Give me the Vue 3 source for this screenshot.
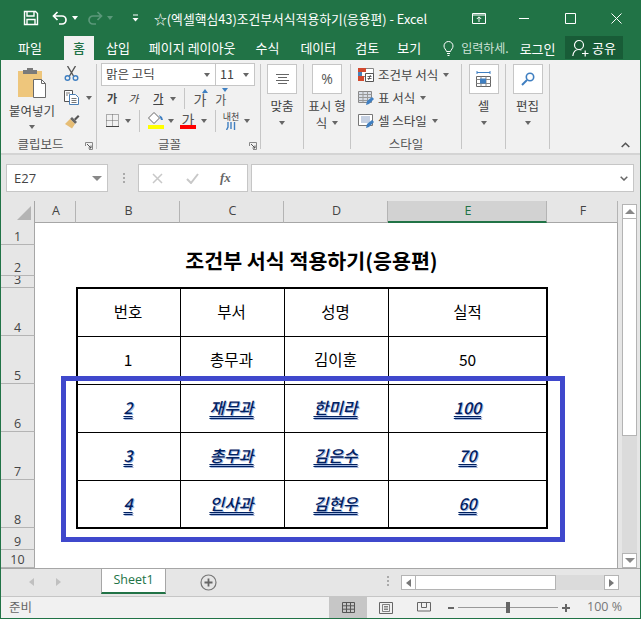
<script setup>
const tabs = [
  { t: '파일', c: 'tab-file' }, { t: '홈', c: 'tab-home' }, { t: '삽입', c: 'tab-ins' },
  { t: '페이지 레이아웃', c: 'tab-page' }, { t: '수식', c: 'tab-f' }, { t: '데이터', c: 'tab-d' },
  { t: '검토', c: 'tab-r' }, { t: '보기', c: 'tab-v' }
]
const cols = [
  { t: 'A', w: 'A' }, { t: 'B' }, { t: 'C' }, { t: 'D' }, { t: 'E', on: true }, { t: 'F' }
]
const rowHeads = ['1', '2', '3', '4', '5', '6', '7', '8', '9', '10']
const table = [
  ['번호', '부서', '성명', '실적'],
  ['1', '총무과', '김이훈', '50'],
  ['2', '재무과', '한미라', '100'],
  ['3', '총무과', '김은수', '70'],
  ['4', '인사과', '김현우', '60']
]
</script>

<template>
  <div class="win">
    <header class="title">
      <div class="qat">
        <svg class="i-save" width="16" height="16" viewBox="0 0 16 16"><path d="M1.5 1.5h11l2 2v11h-13z" fill="none" stroke="#fff" stroke-width="1.4"/><path d="M4 2v4h7V2M4 14.5V9.5h8v5" fill="none" stroke="#fff" stroke-width="1.4"/></svg>
        <svg class="i-undo" width="16" height="14" viewBox="0 0 16 14"><path d="M2 5h8a4 4 0 0 1 0 8H7M5.500 1 1.500 5l4 4" fill="none" stroke="#fff" stroke-width="1.7"/></svg>
        <i class="caret white small-gap"></i>
        <svg class="i-redo" width="16" height="14" viewBox="0 0 16 14"><path d="M14 5H6a4 4 0 0 0 0 8h3M10.500 1l4 4-4 4" fill="none" stroke="#5b987a" stroke-width="1.7"/></svg>
        <i class="caret dim small-gap"></i>
        <svg class="i-cust" width="7" height="8" viewBox="0 0 7 8"><path d="M1 1h5" stroke="#fff"/><path d="M0.500 4h6L3.500 7.500z" fill="#fff"/></svg>
      </div>
      <div class="doc">☆(엑셀핵심43)조건부서식적용하기(응용편) - Excel</div>
      <div class="winbtns">
        <svg width="14" height="11" viewBox="0 0 14 11"><path d="M.5.500h13v10H.5z" fill="none" stroke="#fff"/><path d="M0 2h14" stroke="#fff"/><path d="M7 9V4M4.800 6 7 3.800 9.200 6" fill="none" stroke="#fff"/></svg>
        <svg class="b-min" width="10" height="10" viewBox="0 0 10 10"><path d="M0 5.500h10" stroke="#fff"/></svg>
        <svg class="b-max" width="11" height="11" viewBox="0 0 11 11"><path d="M.5.500h10v10H.5z" fill="none" stroke="#fff"/></svg>
        <svg class="b-x" width="11" height="11" viewBox="0 0 11 11"><path d="M.5.500l10 10M10.500.500l-10 10" stroke="#fff"/></svg>
      </div>
    </header>

    <nav class="tabs">
      <span v-for="x in tabs" :key="x.t" class="tab" :class="x.c">{{ x.t }}</span>
      <svg class="bulb" width="11" height="15" viewBox="0 0 11 15"><path d="M3.500 10.500C3 8.500 1 7.500 1 5a4.500 4.500 0 0 1 9 0c0 2.500-2 3.500-2.500 5.500zM4 12.500h3M4.500 14.500h2" fill="none" stroke="#fff"/></svg>
      <span class="tell">입력하세.</span>
      <span class="login">로그인</span>
      <span class="share">
        <svg width="17" height="18" viewBox="0 0 17 18"><circle cx="7" cy="6" r="4.500" fill="none" stroke="#fff" stroke-width="1.200"/><path d="M.8 17c.5-4 2.500-6.500 6.200-6.500 1 0 1.800.2 2.500.5M10 14.500h6.500M13.200 11.500v6" fill="none" stroke="#fff" stroke-width="1.200"/></svg>
        공유
      </span>
    </nav>

    <section class="ribbon">
      <div class="grp g-clip">
        <div class="clip-body">
          <div class="paste">
            <svg width="28" height="30" viewBox="0 0 28 30"><path d="M0 3h24v26H0z" fill="#eec67c"/><path d="M5 2h14v4H5z" fill="#7a7a7a"/><path d="M9 0h6v3H9z" fill="#7a7a7a"/><path d="M15.500 11.500h8l4 4v14h-12z" fill="#fff" stroke="#6a6a6a"/><path d="M23.500 11.500v4h4" fill="none" stroke="#6a6a6a"/></svg>
            <span class="paste-t">붙여넣기</span>
            <i class="caret"></i>
          </div>
          <div class="clip-tools">
            <svg width="15" height="15" viewBox="0 0 15 15"><path d="M3.500 0l6 10M11.500 0l-6 10" stroke="#555" stroke-width="1.400"/><circle cx="3.500" cy="12" r="2.300" fill="none" stroke="#3f7fc1" stroke-width="1.400"/><circle cx="11.500" cy="12" r="2.300" fill="none" stroke="#3f7fc1" stroke-width="1.400"/></svg>
            <div class="copy-row">
              <svg width="16" height="15" viewBox="0 0 16 15"><path d="M.5.500h8v11h-8z" fill="#fff" stroke="#555"/><path d="M5.500 4.500h6l3 3v7h-9z" fill="#fff" stroke="#4a7eb5"/><path d="M7.500 8.500h5M7.500 10.500h5M7.500 12.500h5M2 3h4M2 5h2" stroke="#777"/></svg>
              <i class="caret"></i>
            </div>
            <svg width="16" height="15" viewBox="0 0 16 15"><path d="M10 5l4-4 1.500 1.500-4 4z" fill="#555"/><path d="M8 3l5 5-2 2-5-5z" fill="#666"/><path d="M6 5l5 5-3 4.500-7-4.500z" fill="#e6bd75"/></svg>
          </div>
        </div>
        <div class="lab lab-clip"><span>클립보드</span><svg class="launch" width="8" height="8" viewBox="0 0 8 8"><path d="M.5 4V.5H7.500V7.500H4" fill="none" stroke="#888"/><path d="M2 2l4 4M6 3.500V6H3.500" fill="none" stroke="#555"/></svg></div>
      </div>

      <div class="grp g-font">
        <div class="font-body">
          <div class="f-row1">
            <div class="combo c-name"><span>맑은 고딕</span><i class="caret"></i></div>
            <div class="combo c-size"><span>11</span><i class="caret"></i></div>
          </div>
          <div class="f-row2">
            <b class="fb">가</b><em class="fi">가</em><span class="fu">가</span><i class="caret c1"></i>
            <span class="vsep"></span>
            <span class="grow">가<i class="tri up"></i></span>
            <span class="shrink">가<i class="tri down"></i></span>
          </div>
          <div class="f-row3">
            <svg width="13" height="13" viewBox="0 0 13 13"><path d="M.5.500h12v12H.5zM6.500.5v12M.5 6.500h12" fill="none" stroke="#666" stroke-dasharray="1 1"/><path d="M0 12.500h13" stroke="#444"/></svg>
            <i class="caret c2"></i>
            <span class="vsep s2"></span>
            <div class="color fill">
              <svg width="16" height="13" viewBox="0 0 16 13"><path d="M6 .500l5.500 5.500L6 11.500.5 6z" fill="#fff" stroke="#666"/><path d="M11 3l3 2 1 3h-2z" fill="#3f7fc1"/></svg>
              <span class="bar yellow"></span>
            </div>
            <i class="caret c3"></i>
            <div class="color fcolor">
              <span class="ga">가</span>
              <span class="bar red"></span>
            </div>
            <i class="caret c4"></i>
            <span class="vsep s3"></span>
            <div class="phon">
              <span>내천</span>
              <svg width="10" height="8" viewBox="0 0 10 8"><path d="M2 0v5L.5 8M5 0v7M8.500 0v8" fill="none" stroke="#3f7fc1" stroke-width="1.400"/></svg>
            </div>
            <i class="caret c5"></i>
          </div>
        </div>
        <div class="lab lab-font"><span>글꼴</span><svg class="launch" width="8" height="8" viewBox="0 0 8 8"><path d="M.5 4V.5H7.500V7.500H4" fill="none" stroke="#888"/><path d="M2 2l4 4M6 3.500V6H3.500" fill="none" stroke="#555"/></svg></div>
      </div>

      <div class="grp g-one g-align">
        <div class="bigbox"><svg width="13" height="10" viewBox="0 0 13 10"><path d="M0 .500h13M2 3.500h9M0 6.500h13M2 9.500h9" stroke="#666"/></svg></div>
        <span class="big-t">맞춤</span>
        <i class="caret big-c"></i>
      </div>

      <div class="grp g-one g-num">
        <div class="bigbox pct">%</div>
        <span class="big-t">표시 형</span>
        <span class="big-t2">식<i class="caret"></i></span>
      </div>

      <div class="grp g-style">
        <div class="style-body">
          <div class="s-row">
            <svg width="16" height="14" viewBox="0 0 16 14"><path d="M.5.500h15v8h-15z" fill="#fff" stroke="#888"/><path d="M0 0h8v4H0z" fill="#d1492e"/><path d="M0 4h4v4H0z" fill="#4a7eb5"/><path d="M0 8h6v5H0z" fill="#d1492e"/><path d="M7.500 5.500h8v8h-8z" fill="#fff" stroke="#555"/><path d="M9.500 8.500h4M9.500 10.500h4M12.500 7l-2 5" stroke="#444" stroke-width=".8"/></svg>
            <span>조건부 서식</span><i class="caret"></i>
          </div>
          <div class="s-row">
            <svg width="16" height="15" viewBox="0 0 16 15"><path d="M.5.500h13v11H.5z" fill="#d8dde6" stroke="#888"/><path d="M.5 3.500h13M.5 6.500h13M.5 9.500h13M5 .5v11M9.500.5v11" stroke="#999" fill="none"/><path d="M8 14l1-4 5-4 2 2-5 5z" fill="#3f7fc1"/></svg>
            <span>표 서식</span><i class="caret"></i>
          </div>
          <div class="s-row">
            <svg width="16" height="15" viewBox="0 0 16 15"><path d="M.5.500h14v11H.5z" fill="#fff" stroke="#777"/><path d="M3 2h9v7H3z" fill="#c5d0e2"/><path d="M8 14l1-4 5-4 2 2-5 5z" fill="#3f7fc1"/></svg>
            <span>셀 스타일</span><i class="caret"></i>
          </div>
        </div>
        <div class="lab lab-style"><span>스타일</span></div>
      </div>

      <div class="grp g-one g-cell">
        <div class="bigbox"><svg width="15" height="17" viewBox="0 0 15 17"><path d="M1 1.500h13M1 0v3M14 0v3" stroke="#3f7fc1"/><path d="M.5 5.500h14v10H.5z" fill="#fff" stroke="#666"/><path d="M.5 8.500h14M.5 12.500h14M5 5.500v10M10 5.500v10" stroke="#888" fill="none"/><path d="M4 7.500h6v5H4z" fill="#3f7fc1"/></svg></div>
        <span class="big-t">셀</span>
        <i class="caret big-c"></i>
      </div>

      <div class="grp g-one g-edit">
        <div class="bigbox"><svg width="14" height="14" viewBox="0 0 14 14"><circle cx="9" cy="5" r="3.700" fill="none" stroke="#3f7fc1" stroke-width="1.600"/><path d="M6 8l-5 5" stroke="#3f7fc1" stroke-width="2"/></svg></div>
        <span class="big-t">편집</span>
        <i class="caret big-c"></i>
      </div>

      <svg class="collapse" width="9" height="6" viewBox="0 0 9 6"><path d="M.7 5 4.500 1.300 8.300 5" fill="none" stroke="#555" stroke-width="1.600"/></svg>
    </section>

    <section class="fbar">
      <div class="namebox"><span>E27</span><i class="caret gray"></i></div>
      <div class="grip"><i></i><i></i><i></i></div>
      <div class="fxbox">
        <svg width="11" height="11" viewBox="0 0 11 11"><path d="M1 1l9 9M10 1l-9 9" stroke="#c8c8c8" stroke-width="1.500"/></svg>
        <svg class="chk" width="13" height="11" viewBox="0 0 13 11"><path d="M1 6l4 4 7-9" fill="none" stroke="#c8c8c8" stroke-width="2"/></svg>
        <span class="fx">fx</span>
      </div>
      <div class="finput"><svg width="8" height="5" viewBox="0 0 8 5"><path d="M.7.700 4 4l3.300-3.300" fill="none" stroke="#666" stroke-width="1.500"/></svg></div>
    </section>

    <section class="work">
      <div class="sheetwrap">
        <div class="sheet">
          <div class="corner"><i class="corner-tri"></i></div>
          <div v-for="c in cols" :key="c.t" class="ch" :class="{ on: c.on }">{{ c.t }}</div>

          <div v-for="(r, i) in rowHeads" :key="r" class="rh" :class="'r' + (i + 1)"><span>{{ r }}</span></div>

          <div class="sheet-title">조건부 서식 적용하기(응용편)</div>

          <div class="data">
            <template v-for="(row, ri) in table" :key="ri">
              <div v-for="(cell, ci) in row" :key="ci" class="cell" :class="{ fmt: ri > 1, last: ci === 3, bottom: ri === 4 }"><span>{{ cell }}</span></div>
            </template>
          </div>

          <div class="mark"></div>
        </div>
      </div>
      <div class="vscroll">
        <div class="sb-btn"><i class="caret up-c"></i></div>
        <div class="sb-thumb"></div>
        <div class="sb-track"></div>
        <div class="sb-btn"><i class="caret gray"></i></div>
      </div>
    </section>

    <section class="tabbar">
      <div class="nav">
        <i class="nav-l"></i><i class="nav-r"></i>
      </div>
      <div class="sheet-tab">Sheet1</div>
      <svg class="add" width="17" height="17" viewBox="0 0 17 17"><circle cx="8.500" cy="8.500" r="7.500" fill="none" stroke="#777" stroke-width="1.200"/><path d="M8.500 4.500v8M4.500 8.500h8" stroke="#666" stroke-width="1.800"/></svg>
      <div class="grip g2"><i></i><i></i><i></i></div>
      <div class="hscroll">
        <div class="hb"><i class="nav-l dark"></i></div>
        <div class="h-thumb"></div>
        <div class="h-track"></div>
        <div class="hb"><i class="nav-r dark"></i></div>
      </div>
    </section>

    <footer class="status">
      <span class="ready">준비</span>
      <div class="views">
        <div class="view on"><svg width="13" height="11" viewBox="0 0 13 11"><path d="M.5.500h12v10H.5zM.5 3.800h12M.5 7.200h12M4.500.500v10M8.500.500v10" fill="none" stroke="#555"/></svg></div>
        <div class="view"><svg width="14" height="12" viewBox="0 0 14 12"><path d="M.5.500h13v11H.5z" fill="none" stroke="#666"/><path d="M3.500 2.500h7v7h-7zM5 4.500h4M5 6h4M5 7.500h4" fill="none" stroke="#666" stroke-width=".8"/></svg></div>
        <div class="view"><svg width="14" height="12" viewBox="0 0 14 12"><path d="M.5 9V.500h13V9zM4.500.500v5h5v-5" fill="none" stroke="#666"/></svg></div>
      </div>
      <div class="zoom">
        <i class="zm"></i>
        <div class="slider"><i></i></div>
        <i class="zp"></i>
      </div>
      <span class="pct100">100 %</span>
    </footer>
  </div>
</template>

<style>
html, body { margin: 0; padding: 0; background: #fff; }
</style>

<style scoped>
.win {
  width: 641px; height: 619px; box-sizing: border-box; overflow: hidden;
  border: solid #217346; border-width: 0 1px 1px 1px;
  background: #e6e6e6; color: #444;
  font-family: "Noto Sans CJK KR", "Noto Sans", sans-serif;
  font-size: 12px; line-height: 1;
  display: flex; flex-direction: column;
}
i { display: block; font-style: normal; }

.caret { width: 0; height: 0; border: solid transparent; border-width: 4px 3.5px 0 3.5px; border-top-color: #666; flex: none; }
.caret.white { border-top-color: #fff; }
.caret.dim { border-top-color: #5b987a; }
.caret.gray { border-top-color: #888; border-width: 5px 5px 0 5px; }
.caret.up-c { border-width: 0 5px 5px 5px; border-color: transparent transparent #888 transparent; }

/* title */
.title { height: 36px; background: #217346; display: flex; align-items: center; flex: none; position: relative; }
.qat { display: flex; align-items: center; padding-left: 22px; width: 153px; box-sizing: border-box; flex: none; }
.i-undo { margin-left: 13px; }
.small-gap { margin-left: 4px; }
.i-redo { margin-left: 9px; }
.i-cust { margin-left: 19px; }
.doc { color: #fff; font-size: 12.800px; width: 300px; white-space: nowrap; margin-top: 3px; }
.winbtns { display: flex; align-items: center; margin-left: 18px; }
.b-min { margin-left: 33px; }
.b-max { margin-left: 36px; }
.b-x { margin-left: 35px; }

/* tabs */
.tabs { height: 24px; background: #217346; display: flex; align-items: center; flex: none; color: #fff; font-size: 13px; }
.tab { height: 24px; line-height: 24px; white-space: nowrap; flex: none; }
.tab-file { margin-left: 17px; }
.tab-home { margin-left: 22px; width: 30px; text-align: center; background: #f1f1f1; color: #217346; font-weight: 500; }
.tab-ins { margin-left: 12px; }
.tab-page { margin-left: 19px; }
.tab-f { margin-left: 20px; }
.tab-d { margin-left: 21px; }
.tab-r { margin-left: 19px; }
.tab-v { margin-left: 18px; }
.bulb { margin-left: 22px; flex: none; }
.tell { margin-left: 7px; white-space: nowrap; color: #cfe2d8; font-size: 12px; }
.login { margin-left: 11px; }
.share { position: absolute; left: 565px; top: 36px; width: 58px; height: 23px; background: #185c37; display: flex; align-items: center; justify-content: center; gap: 3px; }

/* ribbon */
.ribbon { height: 93px; background: #f1f1f1; display: flex; flex: none; border-bottom: 2px solid #d4d4d4; box-sizing: content-box; position: relative; }
.grp { height: 85px; margin-top: 4px; border-right: 1px solid #c6c6c6; box-sizing: border-box; flex: none; position: relative; }
.lab { position: absolute; left: 0; right: 0; bottom: -1px; display: flex; justify-content: center; color: #555; font-size: 12.500px; }
.launch { position: absolute; right: 3px; bottom: 0; }
.lab-clip { padding-right: 16px; box-sizing: border-box; }
.lab-clip .launch { right: 3px; }

.g-clip { width: 96px; }
.clip-body { display: flex; }
.paste { width: 60px; display: flex; flex-direction: column; align-items: center; padding-top: 4px; margin-left: 1px; margin-right: 2px; }
.paste-t { margin-top: 7px; font-size: 12.500px; color: #444; white-space: nowrap; }
.paste .caret { margin-top: 7px; }
.clip-tools { display: flex; flex-direction: column; gap: 9px; padding-top: 2px; }
.copy-row { display: flex; align-items: center; gap: 6px; }

.g-font { width: 164px; }
.font-body { padding: 0 0 0 4px; margin-top: -1px; }
.f-row1 { display: flex; }
.combo { height: 23px; box-sizing: border-box; background: #fff; border: 1px solid #c6c6c6; display: flex; align-items: center; justify-content: space-between; padding: 0 5px 0 4px; color: #444; font-size: 12.500px; }
.c-name { width: 115px; }
.c-size { width: 40px; margin-left: -1px; }
.f-row2 { display: flex; align-items: center; height: 23px; margin-top: 1px; position: relative; }
.fb, .fi, .fu { font-size: 11px; color: #444; font-weight: 700; flex: none; }
.fb { margin-left: 6px; }
.fi { margin-left: 11px; font-style: italic; font-weight: 400; }
.fu { margin-left: 15px; text-decoration: underline; font-weight: 500; }
.c1 { margin-left: 7px; }
.vsep { width: 1px; height: 21px; background: #c6c6c6; margin-left: 8px; flex: none; }
.grow, .shrink { position: relative; flex: none; color: #555; }
.grow { margin-left: 8px; font-size: 14px; }
.shrink { margin-left: 9px; font-size: 12px; margin-top: 3px; }
.tri { position: absolute; right: -2px; width: 0; height: 0; border: solid transparent; }
.tri.up { top: -3px; border-width: 0 3px 4px 3px; border-bottom-color: #3f7fc1; }
.tri.down { top: -6px; border-width: 4px 3px 0 3px; border-top-color: #3f7fc1; }
.f-row3 { display: flex; align-items: center; height: 23px; margin-top: -1px; }
.f-row3 > svg { margin-left: 5px; }
.c2 { margin-left: 6px; }
.s2 { margin-left: 8px; height: 22px; }
.color { display: flex; flex-direction: column; align-items: center; width: 16px; flex: none; }
.fill { margin-left: 8px; }
.bar { width: 16px; height: 4px; display: block; }
.yellow { background: #ff0; margin-top: 0; }
.red { background: #f00; margin-top: -1px; }
.c3 { margin-left: 4px; }
.fcolor { margin-left: 6px; }
.ga { font-size: 14px; height: 14px; color: #555; }
.c4 { margin-left: 5px; }
.s3 { margin-left: 8px; height: 22px; }
.phon { display: flex; flex-direction: column; align-items: center; margin-left: 6px; width: 18px; gap: 1px; }
.phon span { font-size: 9px; white-space: nowrap; color: #444; }
.c5 { margin-left: 4px; }
.lab-font { padding-right: 18px; box-sizing: border-box; }

.bigbox { width: 30px; height: 30px; box-sizing: border-box; background: #fff; border: 1px solid #c6c6c6; display: flex; align-items: center; justify-content: center; flex: none; }
.g-one { display: flex; flex-direction: column; align-items: center; }
.big-t { margin-top: 6px; font-size: 12.500px; color: #444; white-space: nowrap; }
.big-c { margin-top: 8px; }
.g-align { width: 43px; }
.g-num { width: 47px; }
.g-cell { width: 44px; }
.g-edit { width: 44px; }
.pct { font-family: "Open Sans", sans-serif; font-size: 14px; color: #555; }
.big-t2 { display: flex; align-items: center; gap: 5px; margin-top: 4px; font-size: 12.500px; color: #444; }

.g-style { width: 111px; }
.style-body { padding: 2px 0 0 7px; display: flex; flex-direction: column; gap: 5px; }
.s-row { display: flex; align-items: center; height: 18px; font-size: 12.500px; color: #444; white-space: nowrap; }
.s-row span { margin-left: 4px; }
.s-row .caret { margin-left: 5px; }
.lab-style { bottom: -1px; }
.collapse { position: absolute; left: 620px; top: 82px; }

/* formula bar */
.fbar { height: 46px; display: flex; align-items: center; padding: 0 5px; flex: none; box-sizing: border-box; }
.namebox { width: 102px; height: 28px; box-sizing: border-box; background: #fff; border: 1px solid #c6c6c6; display: flex; align-items: center; justify-content: space-between; padding: 0 5px 0 7px; font-family: "Open Sans", sans-serif; font-size: 13px; color: #444; }
.grip { display: flex; flex-direction: column; gap: 2px; margin-left: 15px; width: 2px; }
.grip i { width: 2px; height: 2px; background: #aaa; }
.fxbox { width: 110px; height: 28px; box-sizing: border-box; margin-left: 13px; background: #fff; border: 1px solid #c6c6c6; display: flex; align-items: center; padding-left: 13px; }
.chk { margin-left: 23px; }
.fx { margin-left: 21px; font: italic 700 13px "Liberation Serif", serif; color: #666; }
.finput { width: 383px; height: 28px; box-sizing: border-box; margin-left: 3px; background: #fff; border: 1px solid #c6c6c6; display: flex; align-items: center; justify-content: flex-end; padding-right: 5px; }

/* work area */
.work { height: 367px; display: flex; flex: none; }
.sheetwrap { width: 618px; flex: none; }
.sheet {
  position: relative; display: grid;
  grid-template-columns: 34px 41px 104px 104px 104px 159px 71px;
  grid-template-rows: 22px 22px 31px 12px 48px 48px 48px 48px 48px 22px 18px;
  height: 367px; overflow: hidden;
}
.corner { grid-column: 1; grid-row: 1; position: relative; border-right: 1px solid #a6a6a6; box-sizing: border-box; }
.corner-tri { position: absolute; right: 3px; bottom: 3px; width: 0; height: 0; border-style: solid; border-width: 0 0 14px 14px; border-color: transparent transparent #b4b4b4 transparent; }
.ch { grid-row: 1; display: flex; align-items: center; justify-content: center; padding-left: 2px; font-family: "Open Sans", sans-serif; font-size: 12.500px; color: #444; border-right: 1px solid #b4b4b4; border-bottom: 1px solid #a6a6a6; box-sizing: border-box; }
.ch.on { background: #d2d2d2; color: #217346; border-bottom: 2px solid #217346; }
.rh { grid-column: 1; background: #e6e6e6; border-right: 1px solid #a6a6a6; border-bottom: 1px solid #b4b4b4; box-sizing: border-box; display: flex; align-items: flex-end; justify-content: center; font-family: "Open Sans", sans-serif; font-size: 12.500px; color: #444; overflow: hidden; padding-bottom: 1px; }
.r1 { grid-row: 2; }
.r2 { grid-row: 3; }
.r3 { grid-row: 4; padding-bottom: 0; }
.r3 span { transform: translateY(-1px); }
.r4 { grid-row: 5; }
.r5 { grid-row: 6; }
.r6 { grid-row: 7; }
.r7 { grid-row: 8; }
.r8 { grid-row: 9; }
.r9 { grid-row: 10; }
.r10 { grid-row: 11; }
.sheet::before { content: ""; grid-column: 2 / 8; grid-row: 2 / 12; background: #fff; border-right: 1px solid #a6a6a6; box-sizing: border-box; }
.sheet-title { grid-column: 3 / 7; grid-row: 3; display: flex; align-items: flex-end; justify-content: center; padding-bottom: 2px; font-size: 20.600px; font-weight: 700; color: #000; line-height: 1.3; white-space: nowrap; z-index: 1; }
.data {
  grid-column: 3 / 7; grid-row: 5 / 10; z-index: 1;
  display: grid; grid-template-columns: 103px 104px 104px 159px; grid-template-rows: repeat(5, 48px);
  border: 2px solid #000; margin: -1px 0 -1px 0; width: 472px; height: 242px; box-sizing: border-box;
  background: #fff; grid-auto-rows: 48px;
}
.cell { border-right: 1px solid #000; border-bottom: 1px solid #000; display: flex; align-items: center; justify-content: center; color: #000; font-size: 15.500px; box-sizing: border-box; padding: 0 2px 2px 0; }
.cell.last { border-right: 0; }
.cell.bottom { border-bottom: 0; }
.fmt { padding-bottom: 4px; }
.fmt span { color: #002060; font-size: 16px; font-weight: 500; font-style: italic; text-decoration: underline double; text-decoration-thickness: 1px; text-decoration-skip-ink: none; text-underline-offset: 2px; text-shadow: 1px 1px 0 rgba(70, 110, 190, .5); }
.mark { position: absolute; left: 60px; top: 175px; width: 504px; height: 166px; box-sizing: border-box; border: 5px solid #3f48cc; z-index: 2; }

.vscroll { width: 15px; margin-left: 3px; display: flex; flex-direction: column; padding-top: 3px; box-sizing: border-box; }
.sb-btn { height: 15px; background: #fff; border: 1px solid #b4b4b4; box-sizing: border-box; display: flex; align-items: center; justify-content: center; flex: none; }
.sb-thumb { height: 217px; background: #fff; border: 1px solid #b4b4b4; border-top: 0; box-sizing: border-box; flex: none; }
.sb-track { flex: 1; background: #dbdbdb; }

/* tab bar */
.tabbar { height: 29px; display: flex; align-items: flex-start; flex: none; position: relative; border-top: 1px solid #a6a6a6; box-sizing: border-box; border-bottom: 1px solid #c6c6c6; margin-top: 0; }
.nav { width: 100px; display: flex; padding-left: 28px; gap: 22px; box-sizing: border-box; padding-top: 9px; flex: none; }
.nav-l { width: 0; height: 0; border: solid transparent; border-width: 4px 5px 4px 0; border-right-color: #c0c0c0; }
.nav-r { width: 0; height: 0; border: solid transparent; border-width: 4px 0 4px 5px; border-left-color: #c0c0c0; }
.nav-l.dark { border-right-color: #777; }
.nav-r.dark { border-left-color: #777; }
.sheet-tab { width: 63px; height: 23px; margin-top: -1px; background: #fff; border: solid #a6a6a6; border-width: 1px 1px 0 1px; border-bottom: 2px solid #217346; box-sizing: content-box; font-family: "Open Sans", sans-serif; font-size: 12.500px; color: #217346; display: flex; align-items: center; justify-content: center; flex: none; }
.add { margin-left: 34px; margin-top: 5px; flex: none; }
.g2 { margin-left: 170px; margin-top: 7px; flex: none; }
.hscroll { margin-left: 12px; margin-top: 6px; width: 218px; height: 15px; display: flex; background: #dbdbdb; }
.hb { width: 15px; height: 15px; background: #fff; border: 1px solid #b4b4b4; box-sizing: border-box; display: flex; align-items: center; justify-content: center; flex: none; }
.h-thumb { width: 140px; background: #fff; border: 1px solid #b4b4b4; border-left: 0; box-sizing: border-box; flex: none; }
.h-track { flex: 1; }

/* status */
.status { height: 21px; background: #f1f1f1; display: flex; align-items: center; flex: none; color: #666; position: relative; }
.ready { margin-left: 8px; width: 32px; font-size: 12.500px; white-space: nowrap; }
.views { display: flex; margin-left: 288px; height: 21px; }
.view { width: 38px; height: 21px; display: flex; align-items: center; justify-content: center; }
.view.on { background: #c6c6c6; }
.zoom { display: flex; align-items: center; margin-left: 5px; }
.zm { width: 6px; height: 2px; background: #666; }
.slider { width: 100px; height: 1px; background: #999; margin: 0 4px; position: relative; }
.slider i { position: absolute; left: 48px; top: -5px; width: 4px; height: 11px; background: #666; }
.zp { width: 8px; height: 8px; background: linear-gradient(#666, #666) center / 8px 2px no-repeat, linear-gradient(#666, #666) center / 2px 8px no-repeat; }
.pct100 { margin-left: 17px; font-family: "Open Sans", sans-serif; font-size: 12.500px; color: #777; white-space: nowrap; }
</style>
